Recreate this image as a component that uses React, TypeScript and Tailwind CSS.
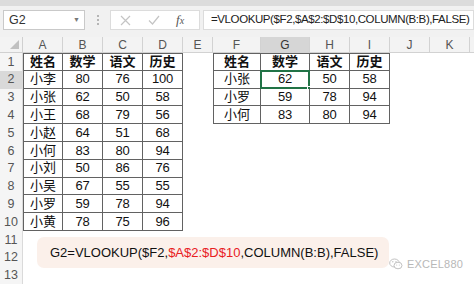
import clsx from 'clsx';

const COLS = ['A', 'B', 'C', 'D', 'E', 'F', 'G', 'H', 'I', 'J', 'K'];

const LEFT: string[][] = [
  ['姓名', '数学', '语文', '历史'],
  ['小李', '80', '76', '100'],
  ['小张', '62', '50', '58'],
  ['小王', '68', '79', '56'],
  ['小赵', '64', '51', '68'],
  ['小何', '83', '80', '94'],
  ['小刘', '50', '86', '76'],
  ['小吴', '67', '55', '55'],
  ['小罗', '59', '78', '94'],
  ['小黄', '78', '75', '96'],
];

const RIGHT: string[][] = [
  ['姓名', '数学', '语文', '历史'],
  ['小张', '62', '50', '58'],
  ['小罗', '59', '78', '94'],
  ['小何', '83', '80', '94'],
];

const FONT = "font-['Liberation_Sans','Noto_Sans_CJK_SC',sans-serif]";

function FormulaBar() {
  return (
    <div className="h-[37px] bg-[#f1f1f1] flex flex-col">
      <div className="h-[6px] bg-[#dcdcdc]" />
      <div className="flex items-center h-[20px] mt-[4px] pl-[3px]">
        <div className="w-[82px] h-[20px] bg-white border border-[#c9c9c9] flex items-center justify-between pl-[5px] pr-[4px]">
          <span className="text-[12.5px] text-[#333]">G2</span>
          <span className="text-[7px] text-[#777]">▼</span>
        </div>
        <div className="w-[25px] flex flex-col items-center gap-[2px]">
          <span className="w-[2px] h-[2px] bg-[#b5b5b5]" />
          <span className="w-[2px] h-[2px] bg-[#b5b5b5]" />
          <span className="w-[2px] h-[2px] bg-[#b5b5b5]" />
        </div>
        <div className="w-[90px] h-[20px] bg-white border border-[#dcdcdc] flex items-center pl-[9px]">
          <svg width="11" height="11" viewBox="0 0 11 11" className="mr-[17px]">
            <path d="M1 1 L10 10 M10 1 L1 10" stroke="#c4c4c4" strokeWidth="1.2" fill="none" />
          </svg>
          <svg width="12" height="10" viewBox="0 0 12 10" className="mr-[16px]">
            <path d="M1 5.5 L4.5 9 L11 1" stroke="#c4c4c4" strokeWidth="1.2" fill="none" />
          </svg>
          <span className="font-['Liberation_Serif',serif] italic text-[13px] text-[#555]">
            f<span className="text-[10px]">x</span>
          </span>
        </div>
        <div className="flex-1 h-[20px] ml-[3px] bg-white border border-[#dcdcdc] flex items-center pl-[7px] overflow-hidden">
          <span className="text-[11.5px] tracking-[-0.4px] text-[#222] whitespace-nowrap">
            =VLOOKUP($F2,$A$2:$D$10,COLUMN(B:B),FALSE)
          </span>
        </div>
      </div>
    </div>
  );
}

function Cell({ r, c }: { r: number; c: number }) {
  const inLeft = r <= 10 && c <= 3;
  const inRight = r <= 4 && c >= 5 && c <= 8;
  const table = inLeft || inRight;
  const text = inLeft ? LEFT[r - 1][c] : inRight ? RIGHT[r - 1][c - 5] : '';
  const selected = r === 2 && c === 6;
  return (
    <div
      className={clsx(
        'relative flex items-center justify-center text-[13px] text-[#111] bg-white',
        table && 'border-r border-b border-[#626262]',
        table && r === 1 && 'border-t font-bold',
        table && (c === 0 || c === 5) && 'border-l'
      )}
    >
      <span className={clsx(/^\d+$/.test(text) && 'tracking-[-0.2px]')}>{text}</span>
      {selected && (
        <>
          <div className="absolute -left-px -top-px -right-px -bottom-px border-2 border-[#217346]" />
          <div className="absolute -right-[3px] -bottom-[3px] w-[5px] h-[5px] bg-[#217346] border border-white" />
        </>
      )}
    </div>
  );
}

function WeChat() {
  return (
    <svg width="14" height="12" viewBox="0 0 14 12">
      <ellipse cx="5.5" cy="5" rx="4.8" ry="4" fill="none" stroke="#c2c2c2" strokeWidth="1" />
      <ellipse cx="9" cy="7.5" rx="4" ry="3.3" fill="#fff" stroke="#c2c2c2" strokeWidth="1" />
      <circle cx="3.8" cy="3.8" r="0.7" fill="#c2c2c2" />
      <circle cx="7" cy="3.8" r="0.7" fill="#c2c2c2" />
      <circle cx="7.7" cy="7" r="0.5" fill="#c2c2c2" />
      <circle cx="10.3" cy="7" r="0.5" fill="#c2c2c2" />
    </svg>
  );
}

export default function App() {
  const rows = Array.from({ length: 13 }, (_, i) => i + 1);
  return (
    <div className={clsx('w-[474px] h-[285px] overflow-hidden bg-white relative', FONT)}>
      <FormulaBar />
      <div className="grid grid-cols-[23px_40px_40px_40px_40px_30px_48px_49px_40px_40px_40px_40px_1fr] grid-rows-[16px_repeat(13,17.8px)]">
        <div className="bg-[#f3f3f3] border-r border-b border-[#d0d0d0] relative">
          <div className="absolute right-[3px] bottom-[3px] w-0 h-0 border-l-[9px] border-l-transparent border-b-[9px] border-b-[#c0c0c0]" />
        </div>
        {COLS.map((col) => (
          <div
            key={col}
            className={clsx(
              'flex items-center justify-center text-[12px] border-r border-b border-[#d2d2d2]',
              col === 'G' ? 'bg-[#d6d6d6] text-[#333]' : 'bg-[#f3f3f3] text-[#555]'
            )}
          >
            {col}
          </div>
        ))}
        <div className="bg-[#f3f3f3] border-b border-[#d2d2d2]" />

        {rows.map((r) => (
          <div key={r} className="contents">
            <div
              className={clsx(
                'flex items-center justify-center text-[12.5px] border-r border-[#dadada]',
                r === 2 ? 'bg-[#d9d9d9] text-[#555]' : 'bg-[#f5f5f5] text-[#555]'
              )}
            >
              {r}
            </div>
            {COLS.map((_, c) => (
              <Cell key={c} r={r} c={c} />
            ))}
            <div className="bg-white" />
          </div>
        ))}
      </div>

      {/* formula callout floats over rows 11-12 */}
      <div className="absolute left-[37px] top-[237px] w-[352px] h-[31px] rounded-[7px] bg-[#fbf0ea] flex items-center pl-[13px] text-[13px] text-[#111] whitespace-nowrap">
        G2=VLOOKUP($F2,<span className="text-[#e8201f]">$A$2:$D$10</span>,COLUMN(B:B),FALSE)
      </div>
      <div className="absolute left-[389px] top-[256px] flex items-center gap-[4px] text-[11px] text-[#b8b8b8] tracking-[0.2px]">
        <WeChat />
        <span>EXCEL880</span>
      </div>
    </div>
  );
}
